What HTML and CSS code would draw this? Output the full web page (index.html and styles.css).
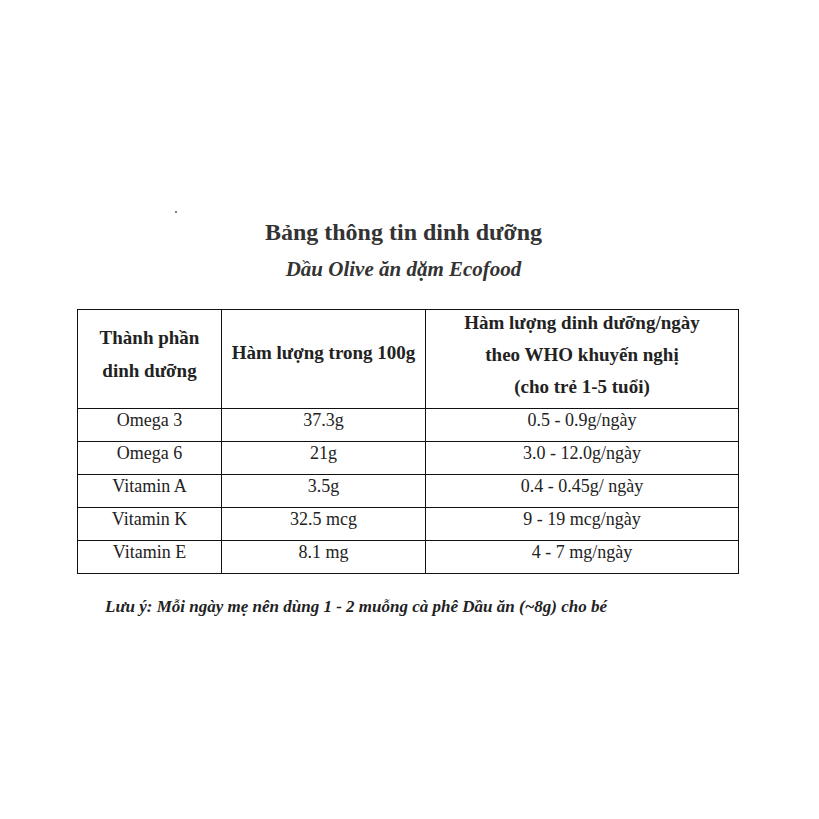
FILE: index.html
```html
<!DOCTYPE html>
<html lang="vi">
<head>
<meta charset="utf-8">
<link rel="stylesheet" href="styles.css">
</head>
<body>
<div class="page">
  <span class="dot"></span>
  <h1 class="title">Bảng thông tin dinh dưỡng</h1>
  <h2 class="subtitle">Dầu Olive ăn dặm Ecofood</h2>
  <table class="nutri">
    <colgroup>
      <col class="c1"><col class="c2"><col class="c3">
    </colgroup>
    <thead>
      <tr>
        <th class="h1"><div class="hin">Thành phần<br>dinh dưỡng</div></th>
        <th class="h2"><div class="hin">Hàm lượng trong 100g</div></th>
        <th class="h3"><div class="hin">Hàm lượng dinh dưỡng/ngày<br>theo WHO khuyến nghị<br>(cho trẻ 1-5 tuổi)</div></th>
      </tr>
    </thead>
    <tbody>
      <tr><td>Omega 3</td><td>37.3g</td><td>0.5 - 0.9g/ngày</td></tr>
      <tr><td>Omega 6</td><td>21g</td><td>3.0 - 12.0g/ngày</td></tr>
      <tr><td>Vitamin A</td><td>3.5g</td><td>0.4 - 0.45g/ ngày</td></tr>
      <tr><td>Vitamin K</td><td>32.5 mcg</td><td>9 - 19 mcg/ngày</td></tr>
      <tr><td>Vitamin E</td><td>8.1 mg</td><td>4 - 7 mg/ngày</td></tr>
    </tbody>
  </table>
  <p class="note">Lưu ý: Mỗi ngày mẹ nên dùng 1 - 2 muỗng cà phê Dầu ăn (~8g) cho bé</p>
</div>
</body>
</html>
```
FILE: styles.css
```css
html, body {
  margin: 0;
  padding: 0;
  background: #fff;
}
.page {
  width: 819px;
  height: 819px;
  position: relative;
  font-family: "Liberation Serif", "Times New Roman", serif;
  color: #222;
  padding-top: 217px;
  box-sizing: border-box;
}
.dot {
  position: absolute;
  left: 175px;
  top: 211px;
  width: 2px;
  height: 2px;
  background: #555;
  border-radius: 1px;
}
.title {
  margin: 0;
  padding-right: 12px;
  text-align: center;
  font-size: 24px;
  line-height: 30px;
  font-weight: bold;
  color: #333;
}
.subtitle {
  margin: 8px 0 0 0;
  padding-right: 12px;
  text-align: center;
  font-size: 21px;
  line-height: 28px;
  font-weight: bold;
  font-style: italic;
  color: #333;
}
.nutri {
  margin: 26px 0 0 77px;
  width: 661px;
  border-collapse: collapse;
  table-layout: fixed;
  font-size: 18px;
}
.c1 { width: 144px; }
.c2 { width: 204px; }
.c3 { width: 313px; }
.nutri th, .nutri td {
  border: 1px solid #111;
  text-align: center;
  padding: 0;
}
.nutri th {
  font-weight: bold;
  font-size: 19px;
  height: 99px;
  vertical-align: top;
  box-sizing: border-box;
}
.nutri .hin { line-height: 32px; }
.nutri .h1 { padding-top: 11px; }
.nutri .h1 .hin { line-height: 33px; }
.nutri .h2 { padding-top: 27px; }
.nutri .h3 .hin { margin-top: -3px; }
.nutri td {
  height: 31px;
  line-height: 20px;
  vertical-align: top;
  padding-top: 1px;
}
.note {
  margin: 23px 0 0 105px;
  font-size: 17px;
  font-weight: bold;
  font-style: italic;
  color: #222;
}
```
